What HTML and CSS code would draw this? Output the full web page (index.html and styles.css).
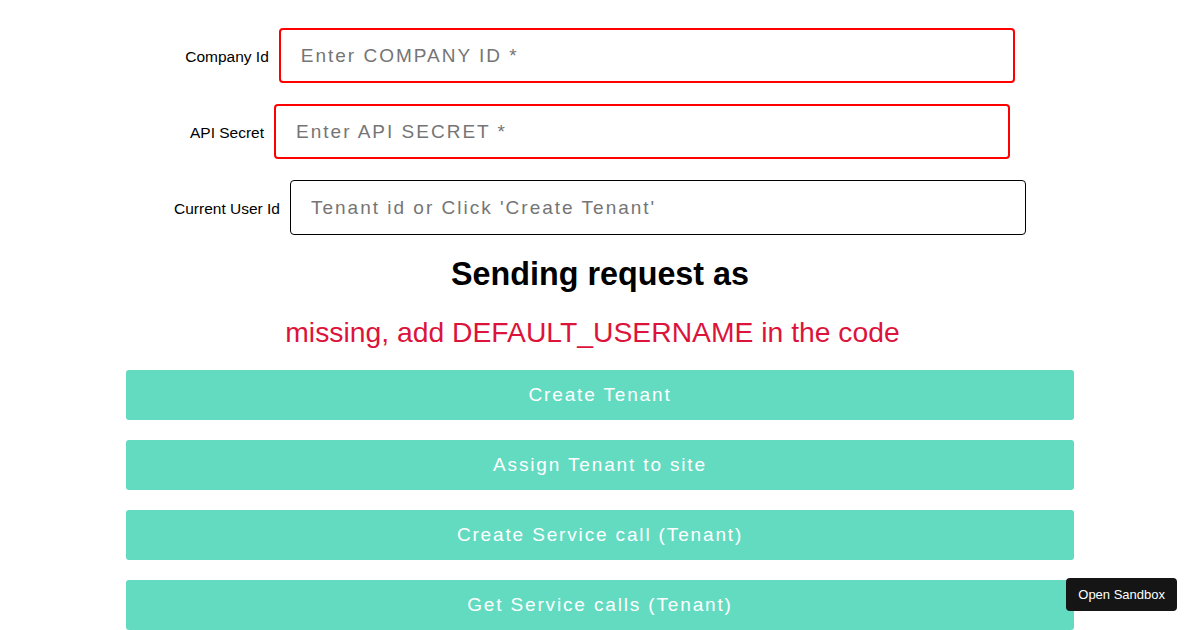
FILE: index.html
```html
<!DOCTYPE html>
<html lang="en">
<head>
    <meta charset="UTF-8">
    <meta name="viewport" content="width=device-width, initial-scale=1.0">
    <title>Tenant demo</title>
    <link rel="stylesheet" href="styles.css">
</head>
<body>
    <div class="app">
        <div class="field">
            <label for="company">Company Id</label>
            <input id="company" class="input required" type="text" placeholder="Enter COMPANY ID *">
        </div>
        <div class="field">
            <label for="secret">API Secret</label>
            <input id="secret" class="input required" type="text" placeholder="Enter API SECRET *">
        </div>
        <div class="field">
            <label for="user">Current User Id</label>
            <input id="user" class="input" type="text" placeholder="Tenant id or Click 'Create Tenant'">
        </div>

        <h2 class="title">Sending request as</h2>
        <p class="warning">missing, add DEFAULT_USERNAME in the code</p>

        <div class="actions">
            <button>Create Tenant</button>
            <button>Assign Tenant to site</button>
            <button>Create Service call (Tenant)</button>
            <button>Get Service calls (Tenant)</button>
        </div>
    </div>

    <a class="sandbox" href="#">Open Sandbox</a>
</body>
</html>
```
FILE: styles.css
```css
body {
    margin: 0;
    font-family: "Liberation Sans", Arial, sans-serif;
    color: #000;
    background: #fff;
    overflow: hidden;
}
.app {
    display: flex;
    flex-direction: column;
    align-items: center;
    padding-top: 28px;
}
.field {
    display: flex;
    align-items: center;
    gap: 10px;
    margin-bottom: 21px;
}
.field label {
    padding-top: 3px;
    font-size: 15.5px;
}
.input {
    box-sizing: border-box;
    width: 736px;
    height: 55px;
    padding: 0 20px;
    border: 1px solid #000;
    border-radius: 4px;
    font-family: "Liberation Sans", Arial, sans-serif;
    font-size: 19px;
    letter-spacing: 2px;
    outline: none;
}
.input.required {
    border: 2px solid #f00;
}
.input::placeholder {
    color: #757575;
}
.title {
    margin: 0;
    font-size: 32.3px;
    line-height: 36px;
}
.warning {
    margin: 24px 0 0;
    padding-right: 15px;
    font-size: 28.3px;
    line-height: 32px;
    color: #dc143c;
}
.actions {
    display: flex;
    flex-direction: column;
    gap: 20px;
    width: 948px;
    margin-top: 22px;
}
.actions button {
    height: 50px;
    border: none;
    border-radius: 3px;
    background: #63dbc1;
    color: #fff;
    font-family: "Liberation Sans", Arial, sans-serif;
    font-size: 19px;
    letter-spacing: 1.85px;
    cursor: pointer;
}
.sandbox {
    position: fixed;
    right: 23px;
    bottom: 19px;
    padding: 9px 12px;
    border-radius: 4px;
    background: #151515;
    color: #fff;
    font-size: 13px;
    text-decoration: none;
}
```
